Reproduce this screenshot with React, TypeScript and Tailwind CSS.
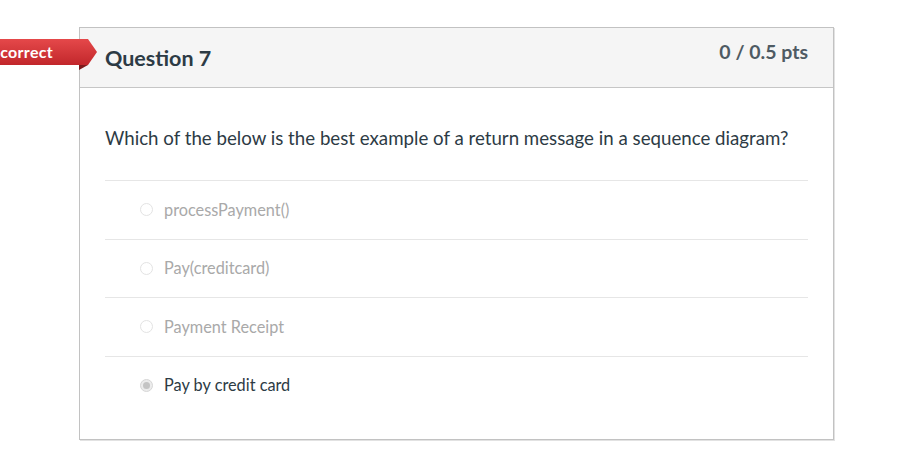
import { Fragment } from "react";

const answers = [
    { id: "a1", text: "processPayment()", selected: false },
    { id: "a2", text: "Pay(creditcard)", selected: false },
    { id: "a3", text: "Payment Receipt", selected: false },
    { id: "a4", text: "Pay by credit card", selected: true },
];

function Radio({ checked }: { checked: boolean }) {
    return (
        <span
            className={`flex items-center justify-center w-[13px] h-[13px] rounded-full border ${
                checked ? "border-[#d6d6d6] bg-[#ececec]" : "border-[#e3e3e3] bg-white"
            }`}
        >
            {checked && <span className="w-[7px] h-[7px] rounded-full bg-[#c4c4c4]" />}
        </span>
    );
}

export default function App() {
    return (
        <div className="relative w-[922px] h-[466px] bg-white overflow-hidden font-['Lato','Noto_Sans',sans-serif]">
            {/* result ribbon, cut off at the left edge */}
            <div className="absolute left-[-40px] top-[39px] z-10 w-[137px] h-[26px]">
                <div className="h-full flex items-center justify-end pr-[44px] bg-gradient-to-b from-[#e5484a] to-[#c2262b] [clip-path:polygon(0_0,128px_0,137px_50%,128px_100%,0_100%)]">
                    <span className="text-white text-[16px] font-bold leading-none tracking-[0.3px] whitespace-nowrap">
                        Incorrect
                    </span>
                </div>
                <div className="absolute left-[119px] top-[26px] w-0 h-0 border-t-[5px] border-t-[#7d1a1c] border-r-[9px] border-r-transparent" />
            </div>

            <div className="pl-[79px] pt-[27px]">
                <div className="w-[755px] border border-[#c2c2c2] shadow-[1px_1px_0_#e2e2e2] bg-white">
                    <div className="h-[60px] bg-[#f5f5f5] border-b border-[#c6c6c6] flex justify-between px-[25px]">
                        <h2 className="pt-[16px] text-[21.5px] font-bold text-[#2d3b45] leading-[28px]">
                            Question 7
                        </h2>
                        <span className="pt-[11px] text-[19.5px] font-bold text-[#4e5a63] leading-[26px]">
                            0 / 0.5 pts
                        </span>
                    </div>

                    <div className="px-[25px] pt-[37px] pb-[25px]">
                        <p className="text-[18.7px] text-[#2d3b45] leading-[26px] mb-[29px] whitespace-nowrap">
                            Which of the below is the best example of a return message in a sequence diagram?
                        </p>
                        {answers.map((answer) => (
                            <Fragment key={answer.id}>
                                <div className="h-[58.5px] border-t border-[#e6e6e6] flex items-center pl-[35px] gap-[11px]">
                                    <Radio checked={answer.selected} />
                                    <span
                                        className={`text-[16.3px] ${
                                            answer.selected ? "text-[#2d3b45]" : "text-[#a9a9a9]"
                                        }`}
                                    >
                                        {answer.text}
                                    </span>
                                </div>
                            </Fragment>
                        ))}
                    </div>
                </div>
            </div>
        </div>
    );
}
